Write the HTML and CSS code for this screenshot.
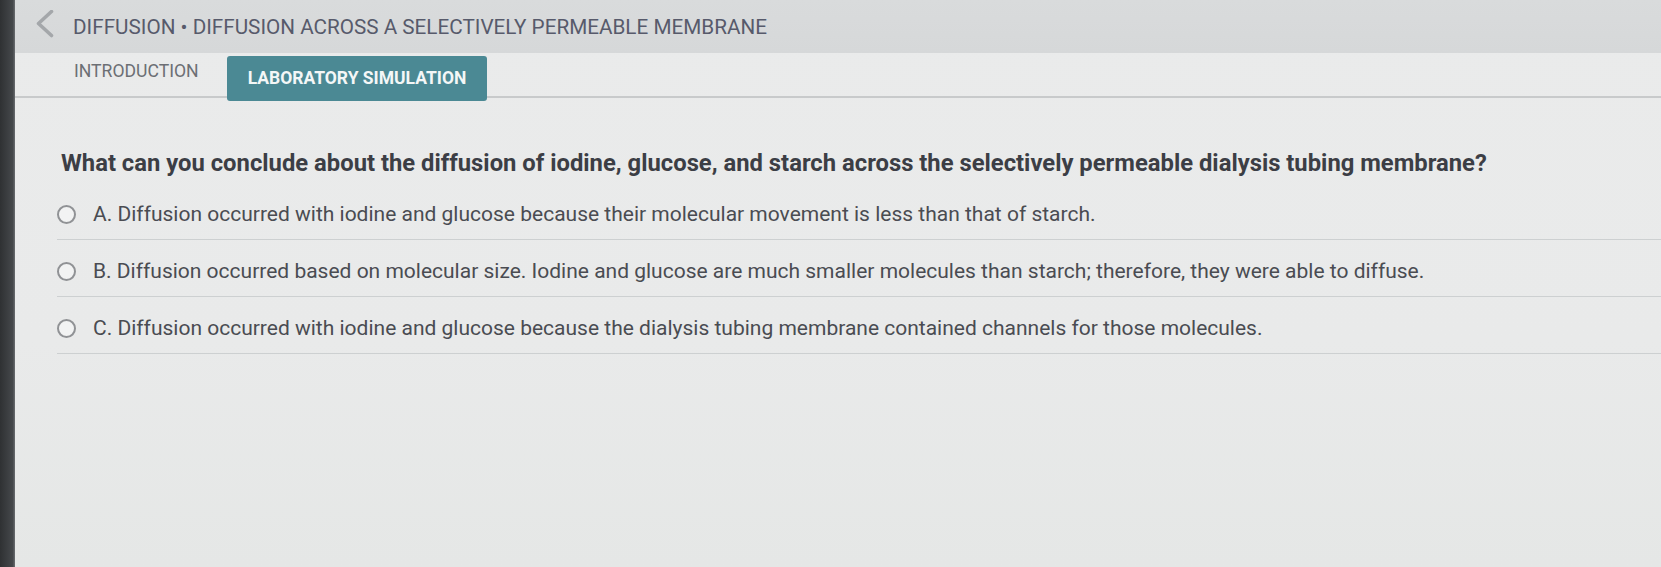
FILE: index.html
```html
<!DOCTYPE html>
<html lang="en">
<head>
<meta charset="utf-8">
<title>Diffusion across a selectively permeable membrane</title>
<link rel="stylesheet" href="styles.css">
</head>
<body>
<div class="screen">
  <div class="bezel"></div>
  <div class="app">
    <header class="header">
      <button class="back" aria-label="Back">
        <svg width="18" height="28" viewBox="0 0 18 28" aria-hidden="true">
          <path d="M15.5 1.5 L2.5 13.5 L15.5 25.5" fill="none" stroke="#a4a7aa" stroke-width="3.6" stroke-linecap="round" stroke-linejoin="round"/>
        </svg>
      </button>
      <h1 class="title">DIFFUSION • DIFFUSION ACROSS A SELECTIVELY PERMEABLE MEMBRANE</h1>
    </header>
    <nav class="tabs">
      <span class="tab">INTRODUCTION</span>
      <span class="tab tab-active">LABORATORY SIMULATION</span>
    </nav>
    <main class="content">
      <p class="question">What can you conclude about the diffusion of iodine, glucose, and starch across the selectively permeable dialysis tubing membrane?</p>
      <ul class="options">
        <li class="option"><span class="radio"></span><span class="option-text">A. Diffusion occurred with iodine and glucose because their molecular movement is less than that of starch.</span></li>
        <li class="option"><span class="radio"></span><span class="option-text">B. Diffusion occurred based on molecular size. Iodine and glucose are much smaller molecules than starch; therefore, they were able to diffuse.</span></li>
        <li class="option"><span class="radio"></span><span class="option-text">C. Diffusion occurred with iodine and glucose because the dialysis tubing membrane contained channels for those molecules.</span></li>
      </ul>
    </main>
  </div>
</div>
</body>
</html>
```
FILE: styles.css
```css
* { box-sizing: border-box; }
html, body { margin: 0; padding: 0; }
body {
  width: 1661px;
  height: 567px;
  overflow: hidden;
  font-family: Roboto, "Liberation Sans", sans-serif;
  background: #e8e9e9;
}
.screen {
  display: flex;
  height: 567px;
}
.bezel {
  width: 15px;
  flex: 0 0 15px;
  background: linear-gradient(90deg, #2f3133 0%, #45484b 85%, #6b6e71 100%);
}
.app {
  flex: 1;
  display: flex;
  flex-direction: column;
  background: linear-gradient(180deg, #eaebeb 0%, #e9eaea 60%, #e5e7e6 100%);
}
.header {
  height: 53px;
  display: flex;
  align-items: center;
  background: linear-gradient(180deg, #d9dbdc 0%, #d6d8d9 100%);
  padding-left: 21px;
}
.back {
  border: 0;
  background: none;
  padding: 0;
  width: 18px;
  height: 28px;
  display: flex;
  margin-right: 19px;
  margin-top: -6px;
}
.title {
  margin: 0;
  font-size: 20.7px;
  font-weight: 400;
  color: #575a6b;
  white-space: nowrap;
}
.tabs {
  height: 45px;
  display: flex;
  align-items: flex-start;
  padding-left: 59px;
  border-bottom: 2px solid #c8cacb;
  gap: 28px;
}
.tab {
  font-size: 17.6px;
  color: #6c6f74;
  margin-top: 8px;
  white-space: nowrap;
}
.tab-active {
  font-size: 17.5px;
  margin-top: 3px;
  height: 45px;
  padding: 12px 21px 0;
  background: #4b8994;
  color: #f4f7f7;
  font-weight: 700;
  border-radius: 3px;
  margin-bottom: -3px;
}
.content {
  padding: 0 0 0 42px;
}
.question {
  margin: 51px 0 0 4px;
  font-size: 23.8px;
  font-weight: 700;
  color: #3c3e45;
  white-space: nowrap;
  line-height: 28px;
}
.options {
  list-style: none;
  margin: 6px 0 0;
  padding: 0;
}
.option {
  display: flex;
  align-items: center;
  height: 57px;
  padding: 6px 0 0 0;
  border-bottom: 1px solid #cdd0d1;
}
.radio {
  width: 19px;
  height: 19px;
  flex: 0 0 19px;
  border: 2px solid #909295;
  border-radius: 50%;
  background: #f2f3f3;
  margin-right: 17px;
}
.option-text {
  font-size: 21px;
  color: #4a4c52;
  white-space: nowrap;
}
```
